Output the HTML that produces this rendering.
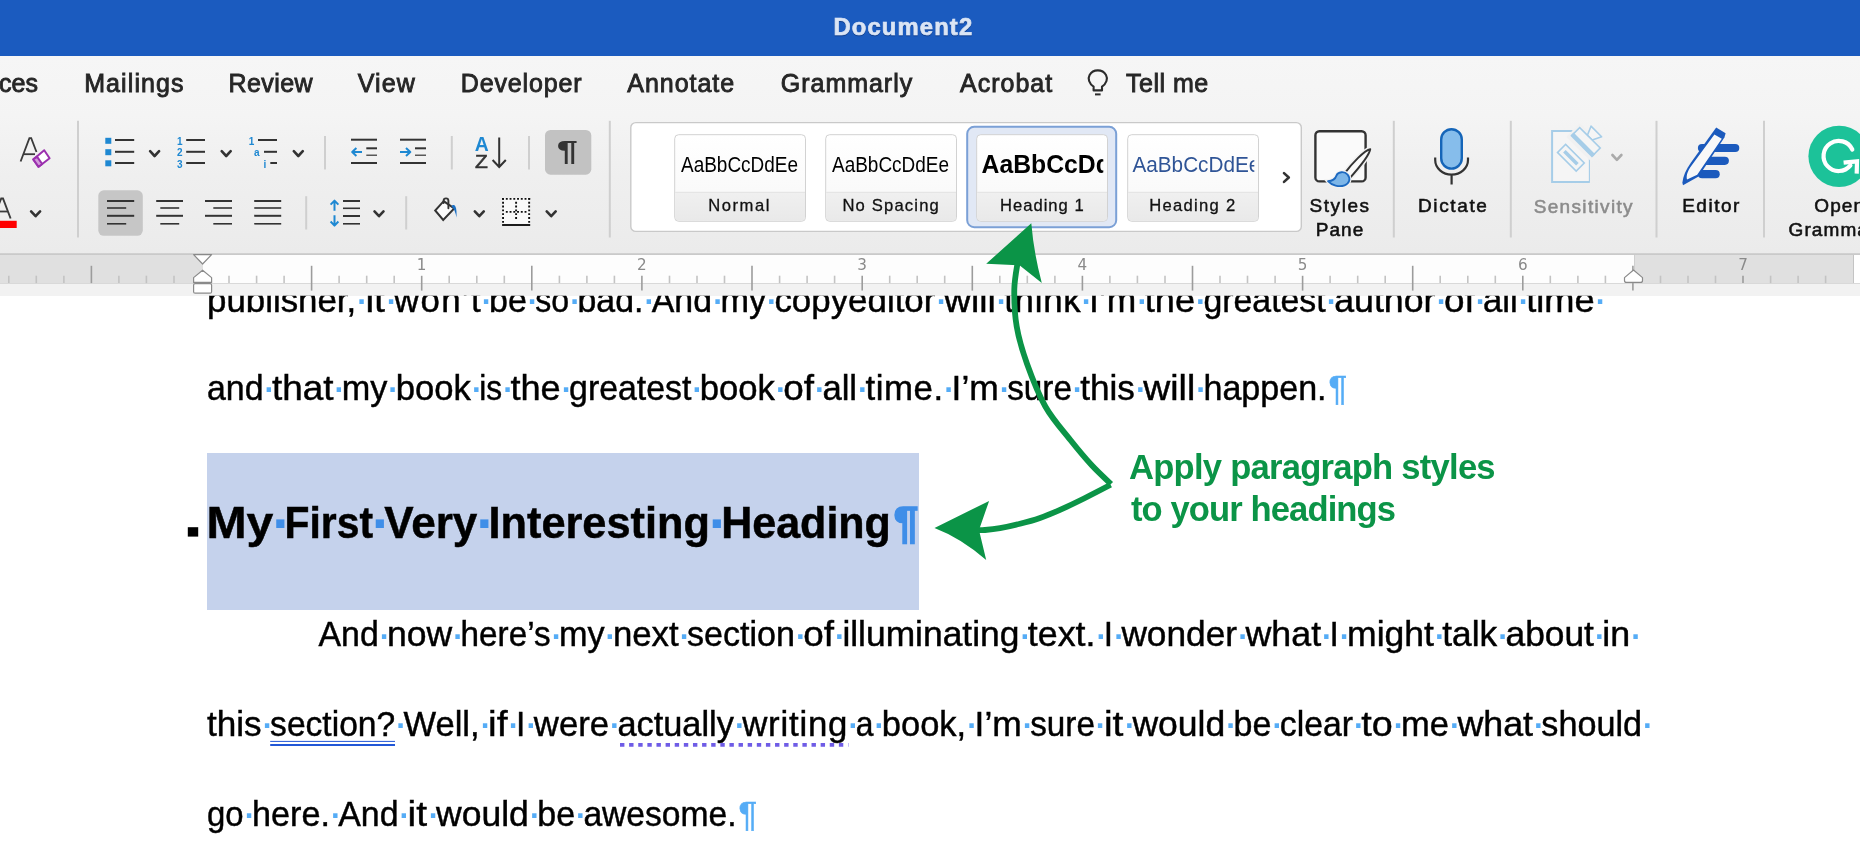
<!DOCTYPE html>
<html lang="en">
<head>
<meta charset="utf-8">
<title>Document2</title>
<style>
html,body{margin:0;padding:0}
body{width:1861px;height:861px;overflow:hidden;position:relative;background:#fff;font-family:"Liberation Sans",sans-serif}
#titlebar{position:absolute;left:0;top:0;width:1861px;height:55.6px;background:#1b5bbf}
#chrome{position:absolute;left:0;top:55.6px;width:1861px;height:197px;background:linear-gradient(#f6f6f6 0,#f4f4f4 60px,#efefef 120px,#ebebeb 197px)}
#chromeline{position:absolute;left:0;top:252.8px;width:1861px;height:2.2px;background:linear-gradient(#d4d4d4,#c6c6c6)}
#ruler{position:absolute;left:0;top:255px;width:1853.5px;height:28.2px;background:#fdfdfd}
#ruler .ml{position:absolute;left:0;top:0;width:202.5px;height:100%;background:#e0e0e0}
#ruler .mr{position:absolute;left:1633.5px;top:0;width:220px;height:100%;background:#e0e0e0;border-left:1px solid #cfcfcf;border-right:1.5px solid #c4c4c4;box-sizing:border-box}
#rulerband{position:absolute;left:0;top:283.1px;width:1861px;height:12.6px;background:#f2f2f2;border-top:1.9px solid #d9d9d9;box-sizing:border-box}
#doc{position:absolute;left:0;top:295.65px;width:1861px;height:565.35px;background:#fff}
#sel{position:absolute;left:207px;top:453.1px;width:711.8px;height:156.6px;background:#c5d2ec}
#rightedge{position:absolute;left:1859.6px;top:0;width:2px;height:861px;background:#fff}
svg{position:absolute;left:0;top:0;will-change:transform}
text{font-family:"Liberation Sans",sans-serif}
.ttl{font-weight:bold;font-size:23.8px;fill:#dbe5f5;stroke:#dbe5f5;stroke-width:.7px}
.tab{font-size:25px;fill:#262626;stroke:#262626;stroke-width:.85px}
.rl{font-size:19px;stroke-width:.55px}
.lab{font-size:16.6px;fill:#111;stroke:#111;stroke-width:.3px;letter-spacing:.85px}
.smp{font-size:22px;fill:#000}
.nb{font-weight:bold;font-size:10px;fill:#1e88d2}
.rn{font-family:"DejaVu Sans",sans-serif;font-size:15.2px;fill:#8a8a8a}
.t1{stroke:#c3c3c3;stroke-width:1.6}
.t2{stroke:#9c9c9c;stroke-width:1.6}
.bd{font-size:34.8px;fill:#000;stroke:#000;stroke-width:.45px}
.hd{font-size:44.9px;font-weight:bold;fill:#000;stroke:#000;stroke-width:.5px}
.mk{fill:#55acf6;stroke:none;font-weight:bold}
.mk.bd{font-size:31px}
.mk.bd.pil{font-weight:normal;stroke:#55acf6;stroke-width:.5px;font-size:34.8px}
.mk.hd{fill:#3f8ee8;font-size:58px}
.mk.hd.pil{font-weight:bold;stroke:#3f8ee8;stroke-width:1.4px;font-size:44.9px}
.ann{font-weight:bold;font-size:34.6px;fill:#0b9447}
</style>
</head>
<body>
<div id="titlebar"></div>
<div id="chrome"></div>
<div id="chromeline"></div>
<div id="ruler"><div class="ml"></div><div class="mr"></div></div>
<div id="rulerband"></div>
<div id="doc"></div>
<div id="sel"></div>
<svg width="1861" height="861" viewBox="0 0 1861 861">
<defs>
<linearGradient id="cardg" x1="0" y1="0" x2="0" y2="1"><stop offset="0" stop-color="#fff"/><stop offset=".65" stop-color="#fafafa"/><stop offset="1" stop-color="#f4f4f4"/></linearGradient>
<linearGradient id="labg" x1="0" y1="0" x2="0" y2="1"><stop offset="0" stop-color="#f0f0f0"/><stop offset="1" stop-color="#e9e9e9"/></linearGradient>
<clipPath id="docclip"><rect x="0" y="295.65" width="1861" height="861"/></clipPath>
<clipPath id="c3"><rect x="976" y="134" width="127.3" height="60"/></clipPath>
<clipPath id="c4"><rect x="1127" y="134" width="127.3" height="60"/></clipPath>
</defs>
<!-- title -->
<text class="ttl" x="902.8" y="35.1" text-anchor="middle" textLength="138.8" lengthAdjust="spacing" style="filter:drop-shadow(0 1.2px .5px rgba(10,45,110,.6))">Document2</text>
<!-- tabs -->
<text class="tab" x="-1.0" y="91.6" textLength="39.0" lengthAdjust="spacing">ces</text>
<text class="tab" x="84.2" y="91.6" textLength="99.3" lengthAdjust="spacing">Mailings</text>
<text class="tab" x="228.5" y="91.6" textLength="84.0" lengthAdjust="spacing">Review</text>
<text class="tab" x="357.7" y="91.6" textLength="57.1" lengthAdjust="spacing">View</text>
<text class="tab" x="460.8" y="91.6" textLength="120.7" lengthAdjust="spacing">Developer</text>
<text class="tab" x="627.3" y="91.6" textLength="106.9" lengthAdjust="spacing">Annotate</text>
<text class="tab" x="780.8" y="91.6" textLength="131.4" lengthAdjust="spacing">Grammarly</text>
<text class="tab" x="960.0" y="91.6" textLength="92.2" lengthAdjust="spacing">Acrobat</text>
<text class="tab" x="1126.0" y="91.6" textLength="82.2" lengthAdjust="spacing">Tell me</text>
<g fill="none" stroke="#2b2b2b" stroke-width="2.1">
<path d="M1093.6,86.6 C1089,83.6 1087.6,78.6 1089.6,75 C1091.6,71.4 1095.6,70.4 1097.8,70.4 C1100,70.4 1104,71.4 1106,75 C1108,78.6 1106.6,83.6 1102,86.6 V90.4 H1093.6 Z" stroke-linejoin="round"/>
<path d="M1095,94.4 H1100.6" stroke-width="2"/>
</g>
<!-- ribbon icons -->
<line x1="78" y1="120.8" x2="78" y2="237.5" stroke="#cfcfcf" stroke-width="2"/>
<line x1="609.8" y1="120.8" x2="609.8" y2="237.5" stroke="#cfcfcf" stroke-width="2"/>
<line x1="1393.8" y1="120.8" x2="1393.8" y2="237.5" stroke="#cfcfcf" stroke-width="2"/>
<line x1="1510.8" y1="120.8" x2="1510.8" y2="237.5" stroke="#cfcfcf" stroke-width="2"/>
<line x1="1656.5" y1="120.8" x2="1656.5" y2="237.5" stroke="#cfcfcf" stroke-width="2"/>
<line x1="1764" y1="120.8" x2="1764" y2="237.5" stroke="#cfcfcf" stroke-width="2"/>
<line x1="325" y1="136" x2="325" y2="169.5" stroke="#cfcfcf" stroke-width="2"/>
<line x1="451.8" y1="136" x2="451.8" y2="169.5" stroke="#cfcfcf" stroke-width="2"/>
<line x1="529" y1="136" x2="529" y2="169.5" stroke="#cfcfcf" stroke-width="2"/>
<line x1="306.2" y1="196.2" x2="306.2" y2="229.5" stroke="#cfcfcf" stroke-width="2"/>
<line x1="406.2" y1="196.2" x2="406.2" y2="229.5" stroke="#cfcfcf" stroke-width="2"/>
<path d="M20.6,161.5 L29.4,138.2 L31.2,138.2 L36.5,152" fill="none" stroke="#3a3a3a" stroke-width="1.8" stroke-linejoin="miter"/>
<line x1="23.6" y1="154.2" x2="35" y2="154.2" stroke="#3a3a3a" stroke-width="1.8"/>
<polygon points="44.2,150.2 49.6,158.2 38.6,166.8 33.3,159.4" fill="#fff" stroke="#9b30ae" stroke-width="2" stroke-linejoin="round"/>
<polygon points="37,156.6 42.2,164 38.6,166.8 33.3,159.4" fill="#d29adb" stroke="#9b30ae" stroke-width="2" stroke-linejoin="round"/>
<path d="M-7,218.5 L1.2,198.5 L3,198.5 L10.6,218.5" fill="none" stroke="#3a3a3a" stroke-width="1.9"/>
<line x1="-4" y1="211.5" x2="8" y2="211.5" stroke="#3a3a3a" stroke-width="1.8"/>
<rect x="0" y="220.8" width="16.7" height="7.2" fill="#ff0000"/>
<polyline points="31.1,211.4 35.6,216.2 40.1,211.4" fill="none" stroke="#333" stroke-width="2.6" stroke-linecap="round" stroke-linejoin="round"/>
<rect x="105.3" y="137.8" width="6" height="6" fill="#1e88d2"/>
<rect x="105.3" y="149.2" width="6" height="6" fill="#1e88d2"/>
<rect x="105.3" y="160.3" width="6" height="6" fill="#1e88d2"/>
<line x1="115" y1="140" x2="134.2" y2="140" stroke="#333" stroke-width="2"/>
<line x1="186.2" y1="140" x2="205" y2="140" stroke="#333" stroke-width="2"/>
<line x1="115" y1="151.8" x2="134.2" y2="151.8" stroke="#333" stroke-width="2"/>
<line x1="186.2" y1="151.8" x2="205" y2="151.8" stroke="#333" stroke-width="2"/>
<line x1="115" y1="163" x2="134.2" y2="163" stroke="#333" stroke-width="2"/>
<line x1="186.2" y1="163" x2="205" y2="163" stroke="#333" stroke-width="2"/>
<polyline points="150.1,151.2 154.6,156.0 159.1,151.2" fill="none" stroke="#333" stroke-width="2.6" stroke-linecap="round" stroke-linejoin="round"/>
<text class="nb" x="179.8" y="144.6" text-anchor="middle">1</text>
<text class="nb" x="179.8" y="156.2" text-anchor="middle">2</text>
<text class="nb" x="179.8" y="167.6" text-anchor="middle">3</text>
<polyline points="221.7,151.2 226.2,156.0 230.7,151.2" fill="none" stroke="#333" stroke-width="2.6" stroke-linecap="round" stroke-linejoin="round"/>
<text class="nb" x="251.6" y="144.6" text-anchor="middle">1</text>
<text class="nb" x="256.9" y="156.2" text-anchor="middle">a</text>
<text class="nb" x="265" y="167.6" text-anchor="middle">i</text>
<line x1="258" y1="140" x2="277" y2="140" stroke="#333" stroke-width="2"/>
<line x1="264" y1="151.8" x2="277" y2="151.8" stroke="#333" stroke-width="2"/>
<line x1="270.3" y1="163" x2="277" y2="163" stroke="#333" stroke-width="2"/>
<polyline points="293.8,151.2 298.3,156.0 302.8,151.2" fill="none" stroke="#333" stroke-width="2.6" stroke-linecap="round" stroke-linejoin="round"/>
<line x1="351" y1="139.7" x2="377" y2="139.7" stroke="#333" stroke-width="2"/>
<line x1="366.3" y1="148.3" x2="377" y2="148.3" stroke="#333" stroke-width="2"/>
<line x1="366.3" y1="155.2" x2="377" y2="155.2" stroke="#333" stroke-width="1.2"/>
<line x1="351" y1="163" x2="377" y2="163" stroke="#333" stroke-width="2"/>
<path d="M362,152 H352.5 M356.4,148 L352.2,152 L356.4,156" fill="none" stroke="#1e88d2" stroke-width="2" stroke-linejoin="round"/>
<line x1="400" y1="139.7" x2="426" y2="139.7" stroke="#333" stroke-width="2"/>
<line x1="415" y1="148.3" x2="426" y2="148.3" stroke="#333" stroke-width="2"/>
<line x1="415" y1="155.2" x2="426" y2="155.2" stroke="#333" stroke-width="1.2"/>
<line x1="400" y1="163" x2="426" y2="163" stroke="#333" stroke-width="2"/>
<path d="M400,152 H409.8 M406,148 L410.3,152 L406,156" fill="none" stroke="#1e88d2" stroke-width="2" stroke-linejoin="round"/>
<text x="474.7" y="150.7" style="font:bold 19.4px 'Liberation Sans',sans-serif" fill="#1e88d2">A</text>
<text transform="translate(474.9,167.9) scale(1.17,1.02)" x="0" y="0" style="font:18px 'Liberation Sans',sans-serif" fill="#333" stroke="#333" stroke-width=".5">Z</text>
<path d="M499.2,137.5 V166.5 M492.6,160 L499.2,167 L505.8,160" fill="none" stroke="#333" stroke-width="2"/>
<rect x="545" y="130" width="46.3" height="44.7" rx="5.5" fill="#c2c2c2"/>
<text transform="translate(567.4,159.7) scale(1.38,1)" x="0" y="0" text-anchor="middle" style="font:bold 27.5px 'Liberation Sans',sans-serif" fill="#333">¶</text>
<rect x="98.3" y="190.3" width="44.5" height="45.5" rx="5.5" fill="#c6c6c6"/>
<line x1="107" y1="201" x2="134.2" y2="201" stroke="#333" stroke-width="2"/>
<line x1="156.2" y1="201" x2="183" y2="201" stroke="#333" stroke-width="2"/>
<line x1="205" y1="201" x2="232" y2="201" stroke="#333" stroke-width="2"/>
<line x1="254.2" y1="201" x2="281.2" y2="201" stroke="#333" stroke-width="2"/>
<line x1="107" y1="208" x2="126.2" y2="208" stroke="#333" stroke-width="1.6"/>
<line x1="160.3" y1="208" x2="179.2" y2="208" stroke="#333" stroke-width="1.6"/>
<line x1="213.3" y1="208" x2="232" y2="208" stroke="#333" stroke-width="1.6"/>
<line x1="254.2" y1="208" x2="281.2" y2="208" stroke="#333" stroke-width="1.6"/>
<line x1="107" y1="215.8" x2="134.2" y2="215.8" stroke="#333" stroke-width="2"/>
<line x1="156.2" y1="215.8" x2="183" y2="215.8" stroke="#333" stroke-width="2"/>
<line x1="205" y1="215.8" x2="232" y2="215.8" stroke="#333" stroke-width="2"/>
<line x1="254.2" y1="215.8" x2="281.2" y2="215.8" stroke="#333" stroke-width="2"/>
<line x1="107" y1="223.8" x2="126.2" y2="223.8" stroke="#333" stroke-width="1.6"/>
<line x1="160.3" y1="223.8" x2="179.2" y2="223.8" stroke="#333" stroke-width="1.6"/>
<line x1="213.3" y1="223.8" x2="232" y2="223.8" stroke="#333" stroke-width="1.6"/>
<line x1="254.2" y1="223.8" x2="281.2" y2="223.8" stroke="#333" stroke-width="1.6"/>
<line x1="343" y1="201" x2="360" y2="201" stroke="#333" stroke-width="2"/>
<line x1="343" y1="208.3" x2="360" y2="208.3" stroke="#333" stroke-width="1.6"/>
<line x1="343" y1="216" x2="360" y2="216" stroke="#333" stroke-width="2"/>
<line x1="343" y1="223.8" x2="360" y2="223.8" stroke="#333" stroke-width="1.6"/>
<path d="M334.5,200.8 V210.8 M330.6,204.6 L334.5,200.6 L338.4,204.6 M334.5,215.3 V225.3 M330.6,221.5 L334.5,225.6 L338.4,221.5" fill="none" stroke="#1e88d2" stroke-width="2" stroke-linejoin="round"/>
<polyline points="374.5,211.4 379.0,216.2 383.5,211.4" fill="none" stroke="#333" stroke-width="2.6" stroke-linecap="round" stroke-linejoin="round"/>
<polygon points="443.6,201.2 454.2,208.4 443.2,220 435.2,210.5" fill="#fbfbfb" stroke="#333" stroke-width="2" stroke-linejoin="miter"/>
<path d="M443.6,203 V200.8 a2.4,2.4 0 0 1 4.8,0 V208.2" fill="none" stroke="#333" stroke-width="1.9" stroke-linecap="round"/>
<path d="M451.4,206.2 C452.4,204.6 454.4,204.8 455.4,206.4 C456.6,208.6 456.7,213 456.5,217.4 C455.6,212.6 454,208.4 451.4,206.2 Z" fill="#1a6fc4"/>
<polyline points="474.8,211.4 479.3,216.2 483.8,211.4" fill="none" stroke="#333" stroke-width="2.6" stroke-linecap="round" stroke-linejoin="round"/>
<rect x="502.1" y="197.9" width="28" height="26" fill="#f9f9f9"/>
<g stroke="#111" stroke-width="1.9" fill="none"><path d="M502.1,198.85 H530.2 M505.84,211.9 H526.5" stroke-dasharray="1.9 1.843"/><path d="M503.05,197.9 V222.9 M516.1,201.73 V219.2 M529.15,197.9 V222.9" stroke-dasharray="1.9 1.93"/></g>
<line x1="502.1" y1="225" x2="530.2" y2="225" stroke="#111" stroke-width="1.9"/>
<polyline points="546.7,211.4 551.2,216.2 555.7,211.4" fill="none" stroke="#333" stroke-width="2.6" stroke-linecap="round" stroke-linejoin="round"/>
<rect x="630.8" y="122.6" width="670.5" height="108.8" rx="5" fill="#fff" stroke="#c9c9c9" stroke-width="1.4"/>
<rect x="967.2" y="126.8" width="149" height="100.4" rx="7" fill="#e1e8f5" stroke="#7ba0d6" stroke-width="2"/>
<rect x="674.7" y="134.7" width="130.8" height="86.6" rx="4" fill="url(#cardg)" stroke="#d2d2d2" stroke-width="1"/>
<path d="M675.2,192.3 H805.0 V217.3 a3.5,3.5 0 0 1 -3.5,3.5 H678.7 a3.5,3.5 0 0 1 -3.5,-3.5 Z" fill="url(#labg)"/>
<line x1="675.2" y1="192.3" x2="805.0" y2="192.3" stroke="#e2e2e2" stroke-width="1"/>
<text class="lab" x="739.6" y="210.8" text-anchor="middle" style="letter-spacing:1.5px">Normal</text>
<text class="smp" x="681.0" y="172" textLength="117" lengthAdjust="spacingAndGlyphs">AaBbCcDdEe</text>
<rect x="825.7" y="134.7" width="130.8" height="86.6" rx="4" fill="url(#cardg)" stroke="#d2d2d2" stroke-width="1"/>
<path d="M826.2,192.3 H956.0 V217.3 a3.5,3.5 0 0 1 -3.5,3.5 H829.7 a3.5,3.5 0 0 1 -3.5,-3.5 Z" fill="url(#labg)"/>
<line x1="826.2" y1="192.3" x2="956.0" y2="192.3" stroke="#e2e2e2" stroke-width="1"/>
<text class="lab" x="891.2" y="210.8" text-anchor="middle" style="letter-spacing:1.18px">No Spacing</text>
<text class="smp" x="832.0" y="172" textLength="117" lengthAdjust="spacingAndGlyphs">AaBbCcDdEe</text>
<rect x="976.7" y="134.7" width="130.8" height="86.6" rx="4" fill="url(#cardg)" stroke="#d2d2d2" stroke-width="1"/>
<path d="M977.2,192.3 H1107.0 V217.3 a3.5,3.5 0 0 1 -3.5,3.5 H980.7 a3.5,3.5 0 0 1 -3.5,-3.5 Z" fill="url(#labg)"/>
<line x1="977.2" y1="192.3" x2="1107.0" y2="192.3" stroke="#e2e2e2" stroke-width="1"/>
<text class="lab" x="1042.3" y="210.8" text-anchor="middle" style="letter-spacing:1.0px">Heading 1</text>
<g clip-path="url(#c3)"><text class="smp" style="font-weight:bold;font-size:25px" x="981.6" y="172.6" textLength="159.5" lengthAdjust="spacingAndGlyphs">AaBbCcDdEe</text></g>
<rect x="1127.7" y="134.7" width="130.8" height="86.6" rx="4" fill="url(#cardg)" stroke="#d2d2d2" stroke-width="1"/>
<path d="M1128.2,192.3 H1258.0 V217.3 a3.5,3.5 0 0 1 -3.5,3.5 H1131.7 a3.5,3.5 0 0 1 -3.5,-3.5 Z" fill="url(#labg)"/>
<line x1="1128.2" y1="192.3" x2="1258.0" y2="192.3" stroke="#e2e2e2" stroke-width="1"/>
<text class="lab" x="1192.9" y="210.8" text-anchor="middle" style="letter-spacing:1.3px">Heading 2</text>
<g clip-path="url(#c4)"><text class="smp" style="font-size:22.5px;fill:#2f5496" x="1132.4" y="172.2" textLength="128" lengthAdjust="spacingAndGlyphs">AaBbCcDdEe</text></g>
<polyline points="1284,173.1 1288.8,177.5 1284,181.9" fill="none" stroke="#333" stroke-width="2.6" stroke-linecap="round" stroke-linejoin="round"/>
<rect x="1315.4" y="131.2" width="50.2" height="50.2" rx="4" fill="#fafafa" stroke="#333" stroke-width="2.4"/>
<path d="M1370.2,149.2 C1365,150 1352,163 1343.6,174.6 L1349.4,178.6 C1358,169 1369.6,155 1370.2,149.2 Z" fill="#fafafa" stroke="#f2f2f2" stroke-width="5" stroke-linejoin="round"/>
<path d="M1370.2,149.2 C1365,150 1352,163 1343.6,174.6 L1349.4,178.6 C1358,169 1369.6,155 1370.2,149.2 Z" fill="#fafafa" stroke="#333" stroke-width="2" stroke-linejoin="round"/>
<path d="M1328,181.2 C1333,181 1335.5,178.4 1336.4,175.6 C1338,171.6 1344.4,171 1347.6,174.6 C1351,178.6 1349.4,183.6 1344.6,185.4 C1339,187.4 1331.6,185.4 1328,181.2 Z" fill="#f2f2f2" stroke="#f2f2f2" stroke-width="4"/>
<path d="M1328,181.2 C1333,181 1335.5,178.4 1336.4,175.6 C1338,171.6 1344.4,171 1347.6,174.6 C1351,178.6 1349.4,183.6 1344.6,185.4 C1339,187.4 1331.6,185.4 1328,181.2 Z" fill="#7db6e8" stroke="#1c69c0" stroke-width="1.8" stroke-linejoin="round"/>
<rect x="1441.2" y="129.2" width="20.6" height="39.4" rx="10.3" fill="#86bdeb" stroke="#1565b8" stroke-width="2.4"/>
<path d="M1435.2,157.4 V160 a16.4,14.6 0 0 0 32.8,0 V157.4 M1451.6,174.6 V184.6" fill="none" stroke="#333" stroke-width="2.2"/>
<path d="M1572.5,131.2 H1552.1 V181.8 H1589.6 V157.8" fill="#f5f5f5" stroke="none"/>
<rect x="1552" y="131" width="37" height="51" fill="#f5f5f5"/>
<path d="M1572.5,131.1 H1552.1 V181.9 H1589.4" fill="none" stroke="#a6cde8" stroke-width="2"/>
<path d="M1589.4,182.8 V157.8" fill="none" stroke="#a6cde8" stroke-width="1.1"/>
<g transform="translate(1586.2,141.6) rotate(45)"><rect x="-16" y="-7" width="32" height="16" fill="#f3f3f3" stroke="#f1f1f1" stroke-width="3"/><polygon points="-3.6,-5.3 3.2,-5.3 7.5,-14.3 -7.5,-14.3" fill="#f5f5f5" stroke="#a6cde8" stroke-width="1.6" stroke-linejoin="round"/><rect x="-14.5" y="-5.3" width="29" height="10.6" fill="#f5f5f5" stroke="#a6cde8" stroke-width="1.6"/><rect x="-15.3" y="2.6" width="30.6" height="4.6" fill="#a6cde8"/></g>
<g transform="translate(1570.9,157.8) rotate(45)"><rect x="-13.2" y="-5.7" width="26.4" height="11.4" fill="#f5f5f5" stroke="#a6cde8" stroke-width="1.6"/><rect x="-9.2" y="-1.8" width="18.4" height="3.6" fill="#a6cde8"/></g>
<polyline points="1612.4,155.0 1616.9,159.8 1621.4,155.0" fill="none" stroke="#aaaaaa" stroke-width="2.6" stroke-linecap="round" stroke-linejoin="round"/>
<line x1="1702" y1="148" x2="1735.2" y2="148" stroke="#1b5abd" stroke-width="8.2" stroke-linecap="round"/>
<line x1="1702" y1="160.8" x2="1724.8" y2="160.8" stroke="#1b5abd" stroke-width="8.2" stroke-linecap="round"/>
<line x1="1702" y1="174.2" x2="1715.6" y2="174.2" stroke="#1b5abd" stroke-width="8.2" stroke-linecap="round"/>
<path d="M1716.2,127.6 L1725.6,133.2 L1724.4,137.6 L1698.6,176.6 L1683,185.2 L1682.4,182.8 C1683,176 1686,169.6 1691,162.4 Z" fill="#1b5abd"/>
<path d="M1714.4,134.6 L1721.8,138.8 L1697.2,174.8 L1687,179.4 C1686,176 1687.4,171 1691.6,165.4 Z" fill="#f8f8f8"/>
<circle cx="1839.05" cy="156.35" r="30.65" fill="#1cc299"/>
<path d="M1852.3,149.5 A15.1,15.1 0 1 0 1850.4,165.4" fill="none" stroke="#fff" stroke-width="4.2" stroke-linecap="round"/>
<path d="M1843.6,162.6 L1857,161.3 L1856.7,173.6" fill="none" stroke="#fff" stroke-width="4.2" stroke-linejoin="miter"/>
<text class="rl" x="1309.5" y="212.4" textLength="59.6" lengthAdjust="spacing" fill="#111" stroke="#111">Styles</text>
<text class="rl" x="1315.7" y="235.7" textLength="47.6" lengthAdjust="spacing" fill="#111" stroke="#111">Pane</text>
<text class="rl" x="1417.9" y="212.4" textLength="69.0" lengthAdjust="spacing" fill="#111" stroke="#111">Dictate</text>
<text class="rl" x="1533.7" y="212.6" textLength="98.9" lengthAdjust="spacing" fill="#8b8b8b" stroke="#8b8b8b">Sensitivity</text>
<text class="rl" x="1682.2" y="212.4" textLength="57.1" lengthAdjust="spacing" fill="#111" stroke="#111">Editor</text>
<text class="rl" x="1814.3" y="212.4" fill="#111" stroke="#111" letter-spacing="1.1">Open</text>
<text class="rl" x="1788.5" y="235.7" fill="#111" stroke="#111" letter-spacing="1.1">Grammarly</text>
<!-- ruler -->
<line x1="8.8" y1="275.7" x2="8.8" y2="283.1" class="t1"/>
<line x1="36.3" y1="275.7" x2="36.3" y2="283.1" class="t1"/>
<line x1="63.9" y1="275.7" x2="63.9" y2="283.1" class="t1"/>
<line x1="91.4" y1="265.8" x2="91.4" y2="283.1" class="t2"/>
<line x1="118.9" y1="275.7" x2="118.9" y2="283.1" class="t1"/>
<line x1="146.4" y1="275.7" x2="146.4" y2="283.1" class="t1"/>
<line x1="174.0" y1="275.7" x2="174.0" y2="283.1" class="t1"/>
<line x1="229.0" y1="275.7" x2="229.0" y2="283.1" class="t1"/>
<line x1="256.6" y1="275.7" x2="256.6" y2="283.1" class="t1"/>
<line x1="284.1" y1="275.7" x2="284.1" y2="283.1" class="t1"/>
<line x1="311.6" y1="265.8" x2="311.6" y2="290.6" class="t2"/>
<line x1="339.1" y1="275.7" x2="339.1" y2="283.1" class="t1"/>
<line x1="366.7" y1="275.7" x2="366.7" y2="283.1" class="t1"/>
<line x1="394.2" y1="275.7" x2="394.2" y2="283.1" class="t1"/>
<line x1="421.7" y1="275.8" x2="421.7" y2="290.6" class="t2"/>
<text class="rn" x="421.7" y="269.7" text-anchor="middle">1</text>
<line x1="449.2" y1="275.7" x2="449.2" y2="283.1" class="t1"/>
<line x1="476.8" y1="275.7" x2="476.8" y2="283.1" class="t1"/>
<line x1="504.3" y1="275.7" x2="504.3" y2="283.1" class="t1"/>
<line x1="531.8" y1="265.8" x2="531.8" y2="290.6" class="t2"/>
<line x1="559.4" y1="275.7" x2="559.4" y2="283.1" class="t1"/>
<line x1="586.9" y1="275.7" x2="586.9" y2="283.1" class="t1"/>
<line x1="614.4" y1="275.7" x2="614.4" y2="283.1" class="t1"/>
<line x1="641.9" y1="275.8" x2="641.9" y2="290.6" class="t2"/>
<text class="rn" x="641.9" y="269.7" text-anchor="middle">2</text>
<line x1="669.5" y1="275.7" x2="669.5" y2="283.1" class="t1"/>
<line x1="697.0" y1="275.7" x2="697.0" y2="283.1" class="t1"/>
<line x1="724.5" y1="275.7" x2="724.5" y2="283.1" class="t1"/>
<line x1="752.0" y1="265.8" x2="752.0" y2="290.6" class="t2"/>
<line x1="779.6" y1="275.7" x2="779.6" y2="283.1" class="t1"/>
<line x1="807.1" y1="275.7" x2="807.1" y2="283.1" class="t1"/>
<line x1="834.6" y1="275.7" x2="834.6" y2="283.1" class="t1"/>
<line x1="862.2" y1="275.8" x2="862.2" y2="290.6" class="t2"/>
<text class="rn" x="862.2" y="269.7" text-anchor="middle">3</text>
<line x1="889.7" y1="275.7" x2="889.7" y2="283.1" class="t1"/>
<line x1="917.2" y1="275.7" x2="917.2" y2="283.1" class="t1"/>
<line x1="944.7" y1="275.7" x2="944.7" y2="283.1" class="t1"/>
<line x1="972.3" y1="265.8" x2="972.3" y2="290.6" class="t2"/>
<line x1="999.8" y1="275.7" x2="999.8" y2="283.1" class="t1"/>
<line x1="1027.3" y1="275.7" x2="1027.3" y2="283.1" class="t1"/>
<line x1="1054.9" y1="275.7" x2="1054.9" y2="283.1" class="t1"/>
<line x1="1082.4" y1="275.8" x2="1082.4" y2="290.6" class="t2"/>
<text class="rn" x="1082.4" y="269.7" text-anchor="middle">4</text>
<line x1="1109.9" y1="275.7" x2="1109.9" y2="283.1" class="t1"/>
<line x1="1137.4" y1="275.7" x2="1137.4" y2="283.1" class="t1"/>
<line x1="1165.0" y1="275.7" x2="1165.0" y2="283.1" class="t1"/>
<line x1="1192.5" y1="265.8" x2="1192.5" y2="290.6" class="t2"/>
<line x1="1220.0" y1="275.7" x2="1220.0" y2="283.1" class="t1"/>
<line x1="1247.5" y1="275.7" x2="1247.5" y2="283.1" class="t1"/>
<line x1="1275.1" y1="275.7" x2="1275.1" y2="283.1" class="t1"/>
<line x1="1302.6" y1="275.8" x2="1302.6" y2="290.6" class="t2"/>
<text class="rn" x="1302.6" y="269.7" text-anchor="middle">5</text>
<line x1="1330.1" y1="275.7" x2="1330.1" y2="283.1" class="t1"/>
<line x1="1357.7" y1="275.7" x2="1357.7" y2="283.1" class="t1"/>
<line x1="1385.2" y1="275.7" x2="1385.2" y2="283.1" class="t1"/>
<line x1="1412.7" y1="265.8" x2="1412.7" y2="290.6" class="t2"/>
<line x1="1440.2" y1="275.7" x2="1440.2" y2="283.1" class="t1"/>
<line x1="1467.8" y1="275.7" x2="1467.8" y2="283.1" class="t1"/>
<line x1="1495.3" y1="275.7" x2="1495.3" y2="283.1" class="t1"/>
<line x1="1522.8" y1="275.8" x2="1522.8" y2="290.6" class="t2"/>
<text class="rn" x="1522.8" y="269.7" text-anchor="middle">6</text>
<line x1="1550.3" y1="275.7" x2="1550.3" y2="283.1" class="t1"/>
<line x1="1577.9" y1="275.7" x2="1577.9" y2="283.1" class="t1"/>
<line x1="1605.4" y1="275.7" x2="1605.4" y2="283.1" class="t1"/>
<line x1="1632.9" y1="265.8" x2="1632.9" y2="290.6" class="t2"/>
<line x1="1660.5" y1="275.7" x2="1660.5" y2="283.1" class="t1"/>
<line x1="1688.0" y1="275.7" x2="1688.0" y2="283.1" class="t1"/>
<line x1="1715.5" y1="275.7" x2="1715.5" y2="283.1" class="t1"/>
<line x1="1743.0" y1="275.8" x2="1743.0" y2="283.1" class="t2"/>
<text class="rn" x="1743.0" y="269.7" text-anchor="middle">7</text>
<line x1="1770.6" y1="275.7" x2="1770.6" y2="283.1" class="t1"/>
<line x1="1798.1" y1="275.7" x2="1798.1" y2="283.1" class="t1"/>
<line x1="1825.6" y1="275.7" x2="1825.6" y2="283.1" class="t1"/>
<g fill="#fff" stroke="#8a8a8a" stroke-width="1.2" stroke-linejoin="round">
<path d="M193.6,254.6 H211.6 L202.6,264 Z"/>
<path d="M202.6,270.2 L211.6,277.6 V282.4 H193.6 V277.6 Z"/>
<rect x="193.6" y="283.6" width="18" height="9.6" rx="1.5"/>
<path d="M1633.5,270 L1642.5,277.6 V280.4 a2,2 0 0 1 -2,2 H1626.5 a2,2 0 0 1 -2,-2 V277.6 Z"/>
</g>
<!-- document -->
<rect x="187.8" y="527.2" width="10.4" height="9.4" fill="#000"/>
<g clip-path="url(#docclip)">
<text class="bd" x="207.0" y="311.6" textLength="149.2" lengthAdjust="spacingAndGlyphs">publisher,</text>
<text class="mk bd" x="362.5" y="312.0" text-anchor="middle">·</text>
<text class="bd" x="365.4" y="311.6" textLength="19.5" lengthAdjust="spacingAndGlyphs">it</text>
<text class="mk bd" x="391.8" y="312.0" text-anchor="middle">·</text>
<text class="bd" x="394.0" y="311.6" textLength="86.6" lengthAdjust="spacing">won’t</text>
<text class="mk bd" x="486.8" y="312.0" text-anchor="middle">·</text>
<text class="bd" x="489.0" y="311.6" textLength="37.8" lengthAdjust="spacingAndGlyphs">be</text>
<text class="mk bd" x="533.0" y="312.0" text-anchor="middle">·</text>
<text class="bd" x="535.2" y="311.6" textLength="33.9" lengthAdjust="spacingAndGlyphs">so</text>
<text class="mk bd" x="575.3" y="312.0" text-anchor="middle">·</text>
<text class="bd" x="577.5" y="311.6" textLength="65.9" lengthAdjust="spacingAndGlyphs">bad.</text>
<text class="mk bd" x="649.6" y="312.0" text-anchor="middle">·</text>
<text class="bd" x="651.8" y="311.6" textLength="60.2" lengthAdjust="spacingAndGlyphs">And</text>
<text class="mk bd" x="718.3" y="312.0" text-anchor="middle">·</text>
<text class="bd" x="720.5" y="311.6" textLength="45.6" lengthAdjust="spacingAndGlyphs">my</text>
<text class="mk bd" x="772.2" y="312.0" text-anchor="middle">·</text>
<text class="bd" x="774.4" y="311.6" textLength="161.0" lengthAdjust="spacingAndGlyphs">copyeditor</text>
<text class="mk bd" x="941.8" y="312.0" text-anchor="middle">·</text>
<text class="bd" x="943.9" y="311.6" textLength="51.9" lengthAdjust="spacingAndGlyphs">will</text>
<text class="mk bd" x="1002.0" y="312.0" text-anchor="middle">·</text>
<text class="bd" x="1004.2" y="311.6" textLength="76.5" lengthAdjust="spacing">think</text>
<text class="mk bd" x="1087.0" y="312.0" text-anchor="middle">·</text>
<text class="bd" x="1089.1" y="311.6" textLength="47.2" lengthAdjust="spacingAndGlyphs">I’m</text>
<text class="mk bd" x="1142.6" y="312.0" text-anchor="middle">·</text>
<text class="bd" x="1144.8" y="311.6" textLength="50.2" lengthAdjust="spacingAndGlyphs">the</text>
<text class="mk bd" x="1201.2" y="312.0" text-anchor="middle">·</text>
<text class="bd" x="1203.4" y="311.6" textLength="122.3" lengthAdjust="spacingAndGlyphs">greatest</text>
<text class="mk bd" x="1332.0" y="312.0" text-anchor="middle">·</text>
<text class="bd" x="1334.2" y="311.6" textLength="101.3" lengthAdjust="spacingAndGlyphs">author</text>
<text class="mk bd" x="1441.8" y="312.0" text-anchor="middle">·</text>
<text class="bd" x="1444.0" y="311.6" textLength="30.8" lengthAdjust="spacingAndGlyphs">of</text>
<text class="mk bd" x="1480.9" y="312.0" text-anchor="middle">·</text>
<text class="bd" x="1483.1" y="311.6" textLength="34.7" lengthAdjust="spacingAndGlyphs">all</text>
<text class="mk bd" x="1524.0" y="312.0" text-anchor="middle">·</text>
<text class="bd" x="1526.2" y="311.6" textLength="68.5" lengthAdjust="spacingAndGlyphs">time</text>
<text class="mk bd" x="1600.9" y="312.0" text-anchor="middle">·</text>
<text class="bd" x="207.0" y="399.6" textLength="56.5" lengthAdjust="spacingAndGlyphs">and</text>
<text class="mk bd" x="269.7" y="400.0" text-anchor="middle">·</text>
<text class="bd" x="271.9" y="399.6" textLength="61.5" lengthAdjust="spacingAndGlyphs">that</text>
<text class="mk bd" x="339.6" y="400.0" text-anchor="middle">·</text>
<text class="bd" x="341.8" y="399.6" textLength="45.6" lengthAdjust="spacingAndGlyphs">my</text>
<text class="mk bd" x="393.5" y="400.0" text-anchor="middle">·</text>
<text class="bd" x="395.7" y="399.6" textLength="75.2" lengthAdjust="spacingAndGlyphs">book</text>
<text class="mk bd" x="477.1" y="400.0" text-anchor="middle">·</text>
<text class="bd" x="479.2" y="399.6" textLength="22.9" lengthAdjust="spacingAndGlyphs">is</text>
<text class="mk bd" x="508.3" y="400.0" text-anchor="middle">·</text>
<text class="bd" x="510.5" y="399.6" textLength="50.2" lengthAdjust="spacingAndGlyphs">the</text>
<text class="mk bd" x="566.9" y="400.0" text-anchor="middle">·</text>
<text class="bd" x="569.1" y="399.6" textLength="122.3" lengthAdjust="spacingAndGlyphs">greatest</text>
<text class="mk bd" x="697.6" y="400.0" text-anchor="middle">·</text>
<text class="bd" x="699.7" y="399.6" textLength="75.2" lengthAdjust="spacingAndGlyphs">book</text>
<text class="mk bd" x="781.1" y="400.0" text-anchor="middle">·</text>
<text class="bd" x="783.3" y="399.6" textLength="30.8" lengthAdjust="spacingAndGlyphs">of</text>
<text class="mk bd" x="820.2" y="400.0" text-anchor="middle">·</text>
<text class="bd" x="822.4" y="399.6" textLength="34.7" lengthAdjust="spacingAndGlyphs">all</text>
<text class="mk bd" x="863.2" y="400.0" text-anchor="middle">·</text>
<text class="bd" x="865.4" y="399.6" textLength="77.8" lengthAdjust="spacing">time.</text>
<text class="mk bd" x="949.4" y="400.0" text-anchor="middle">·</text>
<text class="bd" x="951.6" y="399.6" textLength="47.2" lengthAdjust="spacingAndGlyphs">I’m</text>
<text class="mk bd" x="1005.0" y="400.0" text-anchor="middle">·</text>
<text class="bd" x="1007.2" y="399.6" textLength="64.7" lengthAdjust="spacingAndGlyphs">sure</text>
<text class="mk bd" x="1078.0" y="400.0" text-anchor="middle">·</text>
<text class="bd" x="1080.2" y="399.6" textLength="54.7" lengthAdjust="spacingAndGlyphs">this</text>
<text class="mk bd" x="1141.1" y="400.0" text-anchor="middle">·</text>
<text class="bd" x="1143.3" y="399.6" textLength="51.9" lengthAdjust="spacingAndGlyphs">will</text>
<text class="mk bd" x="1201.3" y="400.0" text-anchor="middle">·</text>
<text class="bd" x="1203.5" y="399.6" textLength="123.1" lengthAdjust="spacingAndGlyphs">happen.</text>
<text class="mk bd pil" x="1328.6" y="399.6">¶</text>
<text class="hd" x="206.5" y="538.0" textLength="66.9" lengthAdjust="spacingAndGlyphs">My</text>
<text class="mk hd" x="281.9" y="542.5" text-anchor="middle">·</text>
<text class="hd" x="284.6" y="538.0" textLength="88.4" lengthAdjust="spacingAndGlyphs">First</text>
<text class="mk hd" x="381.5" y="542.5" text-anchor="middle">·</text>
<text class="hd" x="384.2" y="538.0" textLength="93.1" lengthAdjust="spacingAndGlyphs">Very</text>
<text class="mk hd" x="485.8" y="542.5" text-anchor="middle">·</text>
<text class="hd" x="488.5" y="538.0" textLength="221.4" lengthAdjust="spacingAndGlyphs">Interesting</text>
<text class="mk hd" x="718.4" y="542.5" text-anchor="middle">·</text>
<text class="hd" x="721.2" y="538.0" textLength="169.7" lengthAdjust="spacingAndGlyphs">Heading</text>
<text class="mk hd pil" x="893.4" y="538.0">¶</text>
<text class="bd" x="318.5" y="646.1" textLength="60.2" lengthAdjust="spacingAndGlyphs">And</text>
<text class="mk bd" x="384.9" y="646.5" text-anchor="middle">·</text>
<text class="bd" x="387.1" y="646.1" textLength="65.2" lengthAdjust="spacingAndGlyphs">now</text>
<text class="mk bd" x="458.4" y="646.5" text-anchor="middle">·</text>
<text class="bd" x="460.6" y="646.1" textLength="90.0" lengthAdjust="spacingAndGlyphs">here’s</text>
<text class="mk bd" x="556.8" y="646.5" text-anchor="middle">·</text>
<text class="bd" x="559.0" y="646.1" textLength="45.6" lengthAdjust="spacingAndGlyphs">my</text>
<text class="mk bd" x="610.7" y="646.5" text-anchor="middle">·</text>
<text class="bd" x="612.9" y="646.1" textLength="65.7" lengthAdjust="spacingAndGlyphs">next</text>
<text class="mk bd" x="684.8" y="646.5" text-anchor="middle">·</text>
<text class="bd" x="687.0" y="646.1" textLength="108.0" lengthAdjust="spacingAndGlyphs">section</text>
<text class="mk bd" x="801.1" y="646.5" text-anchor="middle">·</text>
<text class="bd" x="803.3" y="646.1" textLength="30.8" lengthAdjust="spacingAndGlyphs">of</text>
<text class="mk bd" x="840.2" y="646.5" text-anchor="middle">·</text>
<text class="bd" x="842.4" y="646.1" textLength="177.0" lengthAdjust="spacingAndGlyphs">illuminating</text>
<text class="mk bd" x="1025.6" y="646.5" text-anchor="middle">·</text>
<text class="bd" x="1027.8" y="646.1" textLength="67.6" lengthAdjust="spacingAndGlyphs">text.</text>
<text class="mk bd" x="1101.6" y="646.5" text-anchor="middle">·</text>
<text class="bd" x="1103.8" y="646.1" textLength="9.3" lengthAdjust="spacingAndGlyphs">I</text>
<text class="mk bd" x="1119.3" y="646.5" text-anchor="middle">·</text>
<text class="bd" x="1121.4" y="646.1" textLength="115.7" lengthAdjust="spacingAndGlyphs">wonder</text>
<text class="mk bd" x="1243.3" y="646.5" text-anchor="middle">·</text>
<text class="bd" x="1245.5" y="646.1" textLength="75.6" lengthAdjust="spacingAndGlyphs">what</text>
<text class="mk bd" x="1327.2" y="646.5" text-anchor="middle">·</text>
<text class="bd" x="1329.4" y="646.1" textLength="9.3" lengthAdjust="spacingAndGlyphs">I</text>
<text class="mk bd" x="1344.9" y="646.5" text-anchor="middle">·</text>
<text class="bd" x="1347.1" y="646.1" textLength="86.8" lengthAdjust="spacingAndGlyphs">might</text>
<text class="mk bd" x="1440.1" y="646.5" text-anchor="middle">·</text>
<text class="bd" x="1442.3" y="646.1" textLength="54.9" lengthAdjust="spacingAndGlyphs">talk</text>
<text class="mk bd" x="1503.3" y="646.5" text-anchor="middle">·</text>
<text class="bd" x="1505.5" y="646.1" textLength="88.4" lengthAdjust="spacingAndGlyphs">about</text>
<text class="mk bd" x="1600.1" y="646.5" text-anchor="middle">·</text>
<text class="bd" x="1602.3" y="646.1" textLength="27.9" lengthAdjust="spacingAndGlyphs">in</text>
<text class="mk bd" x="1636.4" y="646.5" text-anchor="middle">·</text>
<text class="bd" x="207.0" y="736.0" textLength="54.7" lengthAdjust="spacingAndGlyphs">this</text>
<text class="mk bd" x="267.9" y="736.4" text-anchor="middle">·</text>
<text class="bd" x="270.1" y="736.0" textLength="125.1" lengthAdjust="spacingAndGlyphs">section?</text>
<text class="mk bd" x="401.4" y="736.4" text-anchor="middle">·</text>
<text class="bd" x="403.5" y="736.0" textLength="76.1" lengthAdjust="spacingAndGlyphs">Well,</text>
<text class="mk bd" x="485.8" y="736.4" text-anchor="middle">·</text>
<text class="bd" x="488.1" y="736.0" textLength="19.5" lengthAdjust="spacingAndGlyphs">if</text>
<text class="mk bd" x="513.9" y="736.4" text-anchor="middle">·</text>
<text class="bd" x="516.1" y="736.0" textLength="9.3" lengthAdjust="spacingAndGlyphs">I</text>
<text class="mk bd" x="531.6" y="736.4" text-anchor="middle">·</text>
<text class="bd" x="533.8" y="736.0" textLength="75.3" lengthAdjust="spacingAndGlyphs">were</text>
<text class="mk bd" x="615.2" y="736.4" text-anchor="middle">·</text>
<text class="bd" x="617.4" y="736.0" textLength="116.5" lengthAdjust="spacingAndGlyphs">actually</text>
<text class="mk bd" x="740.1" y="736.4" text-anchor="middle">·</text>
<text class="bd" x="742.2" y="736.0" textLength="105.2" lengthAdjust="spacing">writing</text>
<text class="mk bd" x="853.6" y="736.4" text-anchor="middle">·</text>
<text class="bd" x="855.8" y="736.0" textLength="17.7" lengthAdjust="spacingAndGlyphs">a</text>
<text class="mk bd" x="879.7" y="736.4" text-anchor="middle">·</text>
<text class="bd" x="881.8" y="736.0" textLength="84.4" lengthAdjust="spacingAndGlyphs">book,</text>
<text class="mk bd" x="972.4" y="736.4" text-anchor="middle">·</text>
<text class="bd" x="974.6" y="736.0" textLength="47.2" lengthAdjust="spacingAndGlyphs">I’m</text>
<text class="mk bd" x="1028.0" y="736.4" text-anchor="middle">·</text>
<text class="bd" x="1030.2" y="736.0" textLength="64.7" lengthAdjust="spacingAndGlyphs">sure</text>
<text class="mk bd" x="1101.0" y="736.4" text-anchor="middle">·</text>
<text class="bd" x="1103.9" y="736.0" textLength="19.5" lengthAdjust="spacingAndGlyphs">it</text>
<text class="mk bd" x="1130.2" y="736.4" text-anchor="middle">·</text>
<text class="bd" x="1132.4" y="736.0" textLength="92.9" lengthAdjust="spacingAndGlyphs">would</text>
<text class="mk bd" x="1231.5" y="736.4" text-anchor="middle">·</text>
<text class="bd" x="1233.6" y="736.0" textLength="37.8" lengthAdjust="spacingAndGlyphs">be</text>
<text class="mk bd" x="1277.6" y="736.4" text-anchor="middle">·</text>
<text class="bd" x="1279.8" y="736.0" textLength="73.1" lengthAdjust="spacingAndGlyphs">clear</text>
<text class="mk bd" x="1359.1" y="736.4" text-anchor="middle">·</text>
<text class="bd" x="1361.2" y="736.0" textLength="31.5" lengthAdjust="spacingAndGlyphs">to</text>
<text class="mk bd" x="1398.9" y="736.4" text-anchor="middle">·</text>
<text class="bd" x="1401.1" y="736.0" textLength="47.9" lengthAdjust="spacingAndGlyphs">me</text>
<text class="mk bd" x="1455.2" y="736.4" text-anchor="middle">·</text>
<text class="bd" x="1457.4" y="736.0" textLength="75.6" lengthAdjust="spacingAndGlyphs">what</text>
<text class="mk bd" x="1539.1" y="736.4" text-anchor="middle">·</text>
<text class="bd" x="1541.3" y="736.0" textLength="100.7" lengthAdjust="spacingAndGlyphs">should</text>
<text class="mk bd" x="1648.1" y="736.4" text-anchor="middle">·</text>
<text class="bd" x="207.0" y="825.8" textLength="36.6" lengthAdjust="spacingAndGlyphs">go</text>
<text class="mk bd" x="249.8" y="826.2" text-anchor="middle">·</text>
<text class="bd" x="252.0" y="825.8" textLength="77.9" lengthAdjust="spacingAndGlyphs">here.</text>
<text class="mk bd" x="336.1" y="826.2" text-anchor="middle">·</text>
<text class="bd" x="338.3" y="825.8" textLength="60.2" lengthAdjust="spacingAndGlyphs">And</text>
<text class="mk bd" x="404.6" y="826.2" text-anchor="middle">·</text>
<text class="bd" x="407.5" y="825.8" textLength="19.5" lengthAdjust="spacingAndGlyphs">it</text>
<text class="mk bd" x="433.9" y="826.2" text-anchor="middle">·</text>
<text class="bd" x="436.0" y="825.8" textLength="92.9" lengthAdjust="spacingAndGlyphs">would</text>
<text class="mk bd" x="535.1" y="826.2" text-anchor="middle">·</text>
<text class="bd" x="537.3" y="825.8" textLength="37.8" lengthAdjust="spacingAndGlyphs">be</text>
<text class="mk bd" x="581.2" y="826.2" text-anchor="middle">·</text>
<text class="bd" x="583.4" y="825.8" textLength="153.1" lengthAdjust="spacingAndGlyphs">awesome.</text>
<text class="mk bd pil" x="738.5" y="825.8">¶</text>
</g>
<g stroke="#2257d6"><line x1="270.2" y1="741.4" x2="395" y2="741.4" stroke-width="1"/><line x1="270.2" y1="745" x2="395" y2="745" stroke-width="2.1"/></g>
<line x1="620" y1="744.9" x2="848.4" y2="744.9" stroke="#6f5ce6" stroke-width="3.7" stroke-dasharray="4.4 4.72"/>
<!-- annotation -->
<g fill="none" stroke="#0b9447" stroke-width="5.8" stroke-linejoin="round">
<path d="M1018.0,260.0 C1017.4,264.9 1014.5,278.2 1014.3,289.3 C1014.1,300.4 1014.6,314.1 1016.7,326.5 C1018.8,338.9 1022.2,350.3 1027.0,363.7 C1031.8,377.1 1038.3,394.0 1045.5,406.7 C1052.7,419.4 1062.7,430.2 1070.4,440.0 C1078.2,449.8 1085.2,458.2 1092.0,465.5 C1098.8,472.8 1107.8,480.9 1111.0,484.0"/>
<path d="M1110.6,484.8 C1106.2,487.1 1092.4,494.3 1084.0,498.5 C1075.6,502.7 1067.3,506.6 1060.0,509.9 C1052.7,513.1 1046.7,515.7 1040.0,518.0 C1033.3,520.3 1026.7,522.1 1020.0,523.8 C1013.3,525.5 1005.8,527.2 1000.0,528.2 C994.2,529.2 988.8,529.7 985.0,530.0 C981.2,530.3 978.3,530.2 977.0,530.2"/>
</g>
<path d="M1031.3,223.2 Q1033.8,253 1041.8,283 L1019.5,265.2 L986.2,263.8 Z" fill="#0b9447"/>
<path d="M934.5,528 L989.1,500.9 L979,530 L986.2,560.1 Q961.6,538.4 934.5,528 Z" fill="#0b9447"/>
<text class="ann" x="1129" y="479.2" textLength="366.6" lengthAdjust="spacing">Apply paragraph styles</text>
<text class="ann" x="1131" y="521.4" textLength="265" lengthAdjust="spacing">to your headings</text>
</svg>
<div id="rightedge"></div>
</body>
</html>
